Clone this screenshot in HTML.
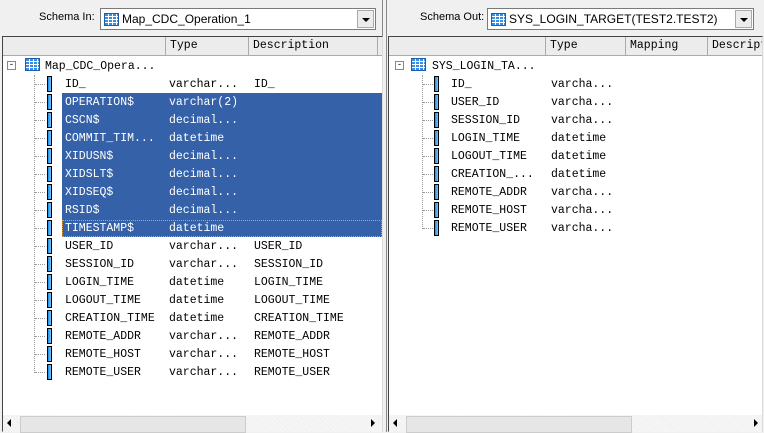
<!DOCTYPE html>
<html><head><meta charset="utf-8"><style>
*{margin:0;padding:0;box-sizing:border-box}
body{width:764px;height:432px;background:#f0f0f0;position:relative;overflow:hidden;font-family:"Liberation Mono",monospace;font-size:11.5px}
.abs{position:absolute}
.lbl{font-family:"Liberation Sans",sans-serif;font-size:11px;color:#000}
.combo{background:#fff;border:1px solid #7a7a7a;height:22px}
.combo .t{position:absolute;left:21px;top:3px;font-family:"Liberation Sans",sans-serif;font-size:12px}
.combo .b{position:absolute;right:1px;top:1px;width:17px;height:18px;background:#ececec;border:1px solid #aaa}
.combo .b:after{content:"";position:absolute;left:4px;top:7px;border-left:4px solid transparent;border-right:4px solid transparent;border-top:4px solid #000}
.tbl{width:15px;height:13px;border:1px solid #1a5fb4;background:repeating-linear-gradient(90deg,transparent 0 3px,#fff 3px 4px),repeating-linear-gradient(0deg,#3a8de0 0 2px,#fff 2px 3px);}
.box{background:#fff;border:1px solid #444;border-right-color:#ddd;border-bottom-color:#ddd}
.hdr{position:absolute;top:0;height:19px;background:#ececec;border-right:1px solid #aaa;border-bottom:1px solid #aaa;font-size:11.5px;padding:2px 0 0 4px}
.row{position:absolute;height:18px;line-height:19px;white-space:pre}
.sel{position:absolute;background:#3461a8}
.ic{position:absolute;width:5px;height:16px;border:1px solid #000;background:linear-gradient(90deg,#1c8fe8,#7cc4ff)}
.dl{position:absolute;border-top:1px dotted #999;width:10px}
.vl{position:absolute;border-left:1px dotted #999}
.sb{position:absolute;height:17px;background:#e8e8e8}
</style></head><body>
<div class="abs" style="left:0;top:0;width:383px;height:36px;border-right:1px solid #888"></div>
<div class="abs lbl" style="left:39px;top:11px">Schema In:</div>
<div class="abs combo" style="left:100px;top:8px;width:276px"><div class="abs tbl" style="left:3px;top:4px"></div><div class="t">Map_CDC_Operation_1</div><div class="b"></div></div>
<div class="abs" style="left:386px;top:0;width:1px;height:432px;background:#888"></div>
<div class="abs lbl" style="left:420px;top:11px">Schema Out:</div>
<div class="abs combo" style="left:487px;top:8px;width:267px"><div class="abs tbl" style="left:3px;top:4px"></div><div class="t">SYS_LOGIN_TARGET(TEST2.TEST2)</div><div class="b"></div></div>

<div class="abs box" style="left:2px;top:36px;width:381px;height:396px;overflow:hidden">
<div class="hdr" style="left:0;width:163px"></div>
<div class="hdr" style="left:163px;width:83px">Type</div>
<div class="hdr" style="left:246px;width:129px">Description</div>
<div class="hdr" style="left:375px;width:10px"></div>
<div class="sel" style="left:59px;top:56px;width:322px;height:144px"></div>
<div class="abs" style="left:59px;top:183px;width:320px;height:17px;border:1px dotted #d8a050"></div>
<div class="vl" style="left:31px;top:38px;height:298px"></div>
<div class="abs" style="left:4px;top:24px;width:9px;height:9px;border:1px solid #888;background:#fff;font-size:9px;line-height:6px;text-align:center">-</div>
<div class="abs tbl" style="left:22px;top:21px"></div>
<div class="row" style="left:42px;top:20px">Map_CDC_Opera...</div>
</div>
<div class="abs box" style="left:388px;top:36px;width:375px;height:396px;overflow:hidden">
<div class="hdr" style="left:0;width:157px"></div>
<div class="hdr" style="left:157px;width:80px">Type</div>
<div class="hdr" style="left:237px;width:82px">Mapping</div>
<div class="hdr" style="left:319px;width:60px">Description</div>
<div class="vl" style="left:33px;top:38px;height:154px"></div>
<div class="abs" style="left:6px;top:24px;width:9px;height:9px;border:1px solid #888;background:#fff;font-size:9px;line-height:6px;text-align:center">-</div>
<div class="abs tbl" style="left:22px;top:21px"></div>
<div class="row" style="left:43px;top:20px">SYS_LOGIN_TA...</div>
</div>
<div class="sb" style="left:3px;top:415px;width:379px;background:repeating-linear-gradient(45deg,#eee 0 1px,#fafafa 1px 2px)"></div>
<div class="sb" style="left:20px;top:416px;width:226px;background:#e6e6e6;border:1px solid #ccc"></div>
<div class="abs" style="left:7px;top:419px;border-top:4px solid transparent;border-bottom:4px solid transparent;border-right:4px solid #000"></div>
<div class="abs" style="left:371px;top:419px;border-top:4px solid transparent;border-bottom:4px solid transparent;border-left:4px solid #000"></div>
<div class="sb" style="left:389px;top:415px;width:373px;background:repeating-linear-gradient(45deg,#eee 0 1px,#fafafa 1px 2px)"></div>
<div class="sb" style="left:406px;top:416px;width:226px;background:#e6e6e6;border:1px solid #ccc"></div>
<div class="abs" style="left:393px;top:419px;border-top:4px solid transparent;border-bottom:4px solid transparent;border-right:4px solid #000"></div>
<div class="abs" style="left:754px;top:419px;border-top:4px solid transparent;border-bottom:4px solid transparent;border-left:4px solid #000"></div>
<div id="L"></div>
<script>
var L=[["ID_","varchar...","ID_"],["OPERATION$","varchar(2)",""],["CSCN$","decimal...",""],["COMMIT_TIM...","datetime",""],["XIDUSN$","decimal...",""],["XIDSLT$","decimal...",""],["XIDSEQ$","decimal...",""],["RSID$","decimal...",""],["TIMESTAMP$","datetime",""],["USER_ID","varchar...","USER_ID"],["SESSION_ID","varchar...","SESSION_ID"],["LOGIN_TIME","datetime","LOGIN_TIME"],["LOGOUT_TIME","datetime","LOGOUT_TIME"],["CREATION_TIME","datetime","CREATION_TIME"],["REMOTE_ADDR","varchar...","REMOTE_ADDR"],["REMOTE_HOST","varchar...","REMOTE_HOST"],["REMOTE_USER","varchar...","REMOTE_USER"]];
var R=[["ID_","varcha..."],["USER_ID","varcha..."],["SESSION_ID","varcha..."],["LOGIN_TIME","datetime"],["LOGOUT_TIME","datetime"],["CREATION_...","datetime"],["REMOTE_ADDR","varcha..."],["REMOTE_HOST","varcha..."],["REMOTE_USER","varcha..."]];
var h="";
L.forEach(function(r,i){var t=75+18*i,c=(i>=1&&i<=8)?"#fff":"#000";
h+='<div class="dl" style="left:35px;top:'+(t+9)+'px"></div><div class="ic" style="left:47px;top:'+(t+1)+'px"></div>';
h+='<div class="row" style="left:65px;top:'+t+'px;color:'+c+'">'+r[0]+'</div><div class="row" style="left:169px;top:'+t+'px;color:'+c+'">'+r[1]+'</div><div class="row" style="left:254px;top:'+t+'px">'+r[2]+'</div>';});
R.forEach(function(r,i){var t=75+18*i;
h+='<div class="dl" style="left:423px;top:'+(t+9)+'px"></div><div class="ic" style="left:434px;top:'+(t+1)+'px"></div>';
h+='<div class="row" style="left:451px;top:'+t+'px">'+r[0]+'</div><div class="row" style="left:551px;top:'+t+'px">'+r[1]+'</div>';});
document.getElementById("L").innerHTML=h;
</script>
</body></html>
